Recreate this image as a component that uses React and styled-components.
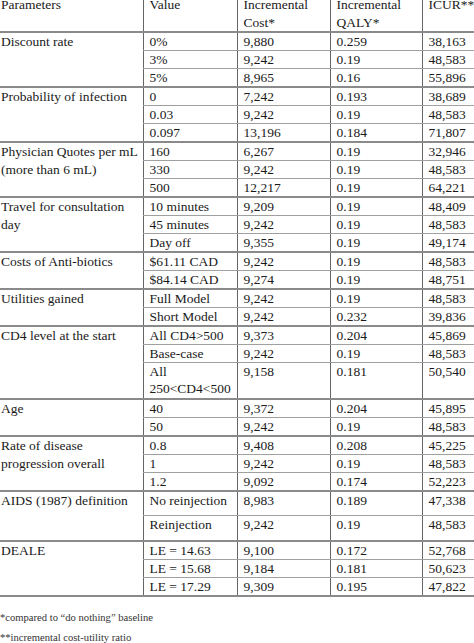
import React from "react";
import styled, { createGlobalStyle } from "styled-components";

const Global = createGlobalStyle`
  html, body { margin: 0; padding: 0; background: #fff; overflow: hidden; }
  body { width: 474px; height: 643px; }
`;

const Page = styled.div`
  width: 474px;
  height: 643px;
  overflow: hidden;
  font-family: "Liberation Serif", "Times New Roman", serif;
  color: #1a1a1a;
`;

const Sheet = styled.div`
  margin: -4px 0 0 -7px;
  width: 530px;
`;

const Table = styled.table`
  border-collapse: collapse;
  table-layout: fixed;
  width: 522px;
  font-size: 13.5px;
`;

const Col = styled.col`
  width: ${(p) => p.$w}px;
`;

const HeadCell = styled.th`
  text-align: left;
  font-weight: normal;
  vertical-align: top;
  padding: 0 6px;
  line-height: 17.5px;
  height: 30px;
  box-sizing: border-box;
  border-left: 1px solid #666;
  border-bottom: 2px solid #8a8a8a;
  &:first-child { border-left: none; padding: 0 2px 0 8px; }
`;

const Cell = styled.td`
  vertical-align: top;
  padding: 0 6px;
  line-height: 17px;
  height: ${(p) => p.$h || 17}px;
  box-sizing: border-box;
  white-space: ${(p) => (p.$wrap ? "normal" : "nowrap")};
  border-left: 1px solid #666;
  border-bottom: ${(p) => (p.$group ? "2px solid #8a8a8a" : "1px solid #a0a0a0")};
`;

const ParamCell = styled.td`
  vertical-align: top;
  padding: 0 2px 0 8px;
  line-height: 18.2px;
  white-space: normal;
  border-bottom: 2px solid #8a8a8a;
`;

const Notes = styled.div`
  margin-top: 11px;
  padding-left: 7px;
  font-size: 10.6px;
  line-height: 20px;
  color: #333;
`;

const groups = [
  {
    name: "Discount rate",
    rows: [
      ["0%", "9,880", "0.259", "38,163"],
      ["3%", "9,242", "0.19", "48,583"],
      ["5%", "8,965", "0.16", "55,896"],
    ],
  },
  {
    name: "Probability of infection",
    rows: [
      ["0", "7,242", "0.193", "38,689"],
      ["0.03", "9,242", "0.19", "48,583"],
      ["0.097", "13,196", "0.184", "71,807"],
    ],
  },
  {
    name: "Physician Quotes per mL (more than 6 mL)",
    rows: [
      ["160", "6,267", "0.19", "32,946"],
      ["330", "9,242", "0.19", "48,583"],
      ["500", "12,217", "0.19", "64,221"],
    ],
  },
  {
    name: "Travel for consultation day",
    rows: [
      ["10 minutes", "9,209", "0.19", "48,409"],
      ["45 minutes", "9,242", "0.19", "48,583"],
      ["Day off", "9,355", "0.19", "49,174"],
    ],
  },
  {
    name: "Costs of Anti-biotics",
    rows: [
      ["$61.11 CAD", "9,242", "0.19", "48,583"],
      ["$84.14 CAD", "9,274", "0.19", "48,751"],
    ],
  },
  {
    name: "Utilities gained",
    rows: [
      ["Full Model", "9,242", "0.19", "48,583"],
      ["Short Model", "9,242", "0.232", "39,836"],
    ],
  },
  {
    name: "CD4 level at the start",
    rows: [
      ["All CD4>500", "9,373", "0.204", "45,869"],
      ["Base-case", "9,242", "0.19", "48,583"],
      ["All 250<CD4<500", "9,158", "0.181", "50,540", { wrap: true, h: 36 }],
    ],
  },
  {
    name: "Age",
    rows: [
      ["40", "9,372", "0.204", "45,895"],
      ["50", "9,242", "0.19", "48,583"],
    ],
  },
  {
    name: "Rate of disease progression overall",
    rows: [
      ["0.8", "9,408", "0.208", "45,225"],
      ["1", "9,242", "0.19", "48,583"],
      ["1.2", "9,092", "0.174", "52,223"],
    ],
  },
  {
    name: "AIDS (1987) definition",
    rows: [
      ["No reinjection", "8,983", "0.189", "47,338", { h: 25 }],
      ["Reinjection", "9,242", "0.19", "48,583", { h: 25 }],
    ],
  },
  {
    name: "DEALE",
    rows: [
      ["LE = 14.63", "9,100", "0.172", "52,768"],
      ["LE = 15.68", "9,184", "0.181", "50,623"],
      ["LE = 17.29", "9,309", "0.195", "47,822"],
    ],
  },
];

export default function App() {
  return (
    <Page>
      <Global />
      <Sheet>
        <Table>
          <colgroup>
            <Col $w={150} />
            <Col $w={94} />
            <Col $w={93} />
            <Col $w={92} />
            <Col $w={93} />
          </colgroup>
          <thead>
            <tr>
              <HeadCell>Parameters</HeadCell>
              <HeadCell>Value</HeadCell>
              <HeadCell>
                Incremental
                <br />
                Cost*
              </HeadCell>
              <HeadCell>
                Incremental
                <br />
                QALY*
              </HeadCell>
              <HeadCell>ICUR**</HeadCell>
            </tr>
          </thead>
          <tbody>
            {groups.map((g) =>
              g.rows.map((r, i) => {
                const opts = r[4] || {};
                const last = i === g.rows.length - 1;
                return (
                  <tr key={g.name + i}>
                    {i === 0 && <ParamCell rowSpan={g.rows.length}>{g.name}</ParamCell>}
                    {r.slice(0, 4).map((v, j) => (
                      <Cell key={j} $group={last} $wrap={opts.wrap} $h={opts.h}>
                        {v}
                      </Cell>
                    ))}
                  </tr>
                );
              })
            )}
          </tbody>
        </Table>
        <Notes>
          <div>*compared to “do nothing” baseline</div>
          <div>**incremental cost-utility ratio</div>
        </Notes>
      </Sheet>
    </Page>
  );
}
